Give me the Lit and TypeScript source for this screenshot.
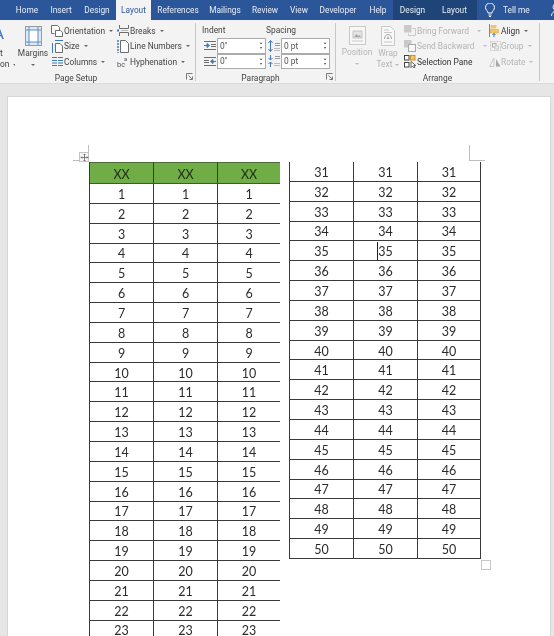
import { LitElement, html, css, svg } from "lit";
import { customElement } from "lit/decorators.js";

const TABS: [string, number, string][] = [
  ["Home", 34, ""], ["Insert", 34, ""], ["Design", 38, ""], ["Layout", 35, "active"],
  ["References", 54, ""], ["Mailings", 40, ""], ["Review", 40, ""], ["View", 28, ""],
  ["Developer", 50, ""], ["Help", 30, ""], ["Design", 39, "ctx"], ["Layout", 45, "ctx"],
];

const B = "#3f79bd", G = "#6d6d6d", L = "#c9c9c9", LD = "#a8a8a8";
const ic = (w: number, h: number, body: unknown) =>
  html`<svg class="ic" width=${w} height=${h} viewBox="0 0 ${w} ${h}">${body}</svg>`;

const icons = {
  margins: ic(17, 20, svg`<rect x=".5" y=".5" width="16" height="19" fill="#fff" stroke="#9a9a9a"/><rect x="1" y="1" width="15" height="18" fill="#dfe8f3"/><rect x="4" y="4" width="9" height="12" fill="#fff"/><path d="M4 1v18M13 1v18M1 4h15M1 16h15" stroke="#5b8fc9" fill="none"/>`),
  orientation: ic(12, 12, svg`<path d="M.5.5h6l2 2v4M.5.5v8h3" fill="#fff" stroke="${G}"/><path d="M4.5 5.5h5l2 2v4h-7z" fill="#fff" stroke="${G}"/>`),
  size: ic(11, 13, svg`<path d="M3 .5h8M.5 3v10" stroke="${B}" fill="none"/><path d="M3.500 3.500h4.500l2.500 2.500v6.500h-7z" fill="#fff" stroke="${G}"/>`),
  columns: ic(11, 9, svg`<path d="M0 .5h5M6 .5h5M0 3.500h5M6 3.500h5M0 6h5M6 6h5M0 8.500h5M6 8.500h5" stroke="${B}" fill="none"/>`),
  breaks: ic(12, 11, svg`<path d="M2.500 0v3.500h9V0M2.500 11V7.500h9V11" stroke="${G}" fill="none"/><path d="M0 5.500h2" stroke="${B}" stroke-width="2"/><path d="M4 5.500h7" stroke="#bbb"/>`),
  lines: ic(12, 13, svg`<path d="M1 0v13" stroke="${B}" stroke-width="1.500" stroke-dasharray="2 1"/><path d="M3.500.5h5l3 3v9h-8z" fill="#fff" stroke="${G}"/>`),
  hyph: ic(12, 11, svg`<text x="0" y="10.500" font-size="7.500" font-family="Roboto" fill="#555">bc</text><text x="7" y="5" font-size="6" font-family="Roboto" fill="#555">a</text>`),
  indL: ic(12, 9, svg`<path d="M0 .5h12M7 3.500h5M7 5.500h5M0 8.500h12" stroke="${G}" fill="none"/><path d="M0 4.500h4M3 2.500l2.500 2-2.500 2z" stroke="${B}" fill="${B}"/>`),
  indR: ic(12, 9, svg`<path d="M0 .5h12M0 3.500h5M0 5.500h5M0 8.500h12" stroke="${G}" fill="none"/><path d="M12 4.500H8M9 2.500l-2.500 2 2.500 2z" stroke="${B}" fill="${B}"/>`),
  spB: ic(12, 12, svg`<path d="M2.500 1v10M.5 3l2-2.500L4.500 3M.5 9l2 2.500L4.500 9" stroke="${B}" fill="none"/><path d="M7 3.500h5M7 5.500h5" stroke="#999" fill="none"/><path d="M6 8.500h6M6 10.500h6" stroke="#bbb" fill="none"/>`),
  spA: ic(12, 12, svg`<path d="M2.500 0v4.500M.5 3l2 2 2-2M2.500 12V7.500M.5 9l2-2 2 2" stroke="${B}" fill="none"/><path d="M7 1.500h5M7 3.500h5" stroke="#999" fill="none"/><path d="M6 8.500h6M6 10.500h6" stroke="#bbb" fill="none"/>`),
  position: ic(17, 19, svg`<rect x=".5" y=".5" width="16" height="18" fill="#f7f7f7" stroke="${L}"/><rect x="4" y="5" width="9" height="7" fill="#e4e4e4" stroke="${LD}" stroke-width=".6"/><path d="M5 11l2.500-3 2 2 1-1 1.500 2z" fill="${LD}"/><path d="M3 15h11" stroke="${L}"/>`),
  wrap: ic(14, 20, svg`<path d="M.5.5h9l4 4v15H.5z" fill="#f8f8f8" stroke="${L}"/><path d="M3 4h5M3 6.500h8M3 16h8" stroke="${L}"/><path d="M3.500 13c0-6 7-6 7 0" stroke="${LD}" fill="none"/><path d="M5.500 13l1.500-3 1.500 3z" fill="${LD}"/>`),
  fwd: ic(12, 11, svg`<rect x="0" y="0" width="7.500" height="7.500" fill="${L}"/><path d="M8.500 3.500h3v7h-7V8.500" fill="none" stroke="${L}"/>`),
  back: ic(12, 12, svg`<rect x="0" y="0" width="7.500" height="7.500" fill="${L}"/><rect x="4.500" y="4.500" width="7" height="7" fill="#f7f7f7" stroke="${LD}"/>`),
  pane: ic(13, 13, svg`<rect x=".5" y=".5" width="4.500" height="4.500" fill="#fff" stroke="#444"/><rect x=".5" y="7.500" width="4.500" height="4.500" fill="#fff" stroke="#444"/><rect x="6.500" y=".5" width="4.500" height="4.500" fill="#f2c46b" stroke="#c98f2a"/><path d="M7 6.500v6l1.500-1.500 1.500 2 1-.7-1.200-1.800h2z" fill="#fff" stroke="#444" stroke-width=".8"/>`),
  align: ic(10, 13, svg`<path d="M.5 0v13" stroke="#888"/><rect x="1.500" y="1" width="6" height="3.500" fill="#f2c46b"/><rect x="1.500" y="5.500" width="8" height="3.500" fill="#f2c46b" stroke="#d9a441" stroke-width=".5"/><path d="M5 13V9.500M3.500 11L5 9.500 6.500 11" stroke="${B}" fill="none"/>`),
  group: ic(13, 12, svg`<rect x="1.500" y="1.500" width="10" height="9" fill="none" stroke="${L}" stroke-dasharray="2 1"/><rect x="3.500" y="3.500" width="3.500" height="3.500" fill="none" stroke="${LD}"/><rect x="6" y="6" width="3.500" height="3" fill="#eee" stroke="${L}"/>`),
  rotate: ic(12, 10, svg`<path d="M.5 9.500L5 1v8.500z" fill="none" stroke="${L}"/><path d="M7 9.500V2l4.500 7.500z" fill="${LD}"/>`),
  launcher: ic(7, 7, svg`<path d="M.5 6.500v-6h6" fill="none" stroke="#777"/><path d="M2.500 2.500l3.500 3.500M6.500 3.500v3h-3" fill="none" stroke="#777"/>`),
  bulb: html`<svg class="ic" width="10" height="14" viewBox="0 0 10 14"><path d="M3 10c0-2-2.500-3-2.500-5.500a4.500 4.500 0 0 1 9 0C9.500 7 7 8 7 10zM3.500 12h3M4 13.500h2" fill="none" stroke="#fff"/></svg>`,
  person: html`<svg class="ic" width="6" height="14" viewBox="0 0 6 14"><circle cx="5" cy="4" r="3" fill="none" stroke="#dfe7f3"/><path d="M.5 13c0-3 2-5 4.500-5" fill="none" stroke="#dfe7f3"/></svg>`,
  move: html`<svg class="ic" width="9" height="9" viewBox="0 0 9 9"><path d="M4.500 1v7M1 4.500h7M3.500 2l1-1 1 1M3.500 7l1 1 1-1M2 3.500l-1 1 1 1M7 3.500l1 1-1 1" fill="none" stroke="#555" stroke-width=".7"/></svg>`,
};

@customElement("app-root")
export class AppRoot extends LitElement {
  static styles = css`
    :host { display: block; width: 554px; height: 636px; overflow: hidden; background: #e6e6e6; font-family: Roboto, sans-serif; filter: blur(0.3px); }
    .ic { display: block; flex: none; }
    .tabs { display: flex; height: 20px; background: #2b579a; padding-left: 10px; color: #e9eef6; font-size: 8.300px; }
    .tab { display: flex; align-items: center; justify-content: center; flex: none; height: 100%; }
    .tab.active { background: #f3f3f3; color: #2b579a; }
    .tab.ctx { background: #1f4478; }
    .tell { display: flex; align-items: center; margin-left: 8px; white-space: nowrap; }
    .tell span { margin-left: 8px; margin-right: 21px; }

    .ribbon { display: flex; height: 63px; background: #f3f3f3; border-bottom: 1px solid #dcdcdc; box-sizing: content-box; color: #444; font-size: 8.400px; }
    .group { position: relative; display: flex; flex-direction: column; flex: none; margin: 3px 0 2px; border-right: 1px solid #c8c8c8; }
    .g1 { width: 195px; } .g2 { width: 139px; } .g3 { width: 203px; }
    .body { display: flex; flex: 1; min-height: 0; }
    .glabel { height: 10px; line-height: 15px; text-align: center; color: #444; }
    .g1 .glabel { padding-right: 43px; }
    .g2 .glabel { padding-right: 10px; }
    .launch { position: absolute; right: 2px; bottom: 1px; }
    .caret { display: inline-block; flex: none; width: 0; height: 0; margin-left: 4px; vertical-align: middle; border: 2px solid transparent; border-top: 2.500px solid #666; border-bottom: 0; }
    .off .caret { border-top-color: #bbb; }

    .clip { width: 15px; flex: none; overflow: hidden; display: flex; flex-direction: column; align-items: flex-start; padding-top: 3px; line-height: 11px; box-sizing: border-box; }
    .clip .a { margin-left: -7px; height: 22px; color: #3f79bd; font-size: 17px; line-height: 14px; }
    .clip .t { white-space: nowrap; }
    .big { display: flex; flex-direction: column; align-items: center; flex: none; padding-top: 3px; line-height: 11px; }
    .big .ic { margin-bottom: 2px; }
    .big.off { color: #b4b4b4; }
    .marg { width: 32px; margin-left: 2px; }
    .big .cl { height: 11px; display: flex; align-items: center; justify-content: center; }
    .big .cl .caret { margin-left: 3px; }
    .big .cl.only .caret { margin-left: 0; }

    .col { display: flex; flex-direction: column; flex: none; }
    .cmd { display: flex; align-items: center; height: 15.500px; white-space: nowrap; }
    .iconbox { width: 14px; flex: none; display: flex; justify-content: center; }
    .c1 { width: 67px; margin-left: 1px; }
    .c2 { width: 73px; }
    .c2 .iconbox { width: 13px; justify-content: flex-start; }
    .off { color: #b4b4b4; }
    .dark { color: #333; }

    .g2 .body { padding-left: 6px; }
    .pcol { display: flex; flex-direction: column; width: 64px; flex: none; }
    .pcol.sp { width: 67px; }
    .plabel { height: 15px; line-height: 14px; }
    .prow { display: flex; align-items: center; height: 15.500px; }
    .pi { width: 15px; flex: none; display: flex; justify-content: center; }
    .input { display: flex; align-items: center; justify-content: space-between; box-sizing: border-box; width: 49px; height: 15.500px; flex: none; background: #fff; border: 1px solid #ababab; padding: 0 2px; color: #555; }
    .spin { display: flex; flex-direction: column; gap: 3px; padding-right: 1px; }
    .spin i { display: block; width: 0; height: 0; border: 1.500px solid transparent; }
    .spin i:first-child { border-bottom: 2px solid #444; border-top: 0; }
    .spin i:last-child { border-top: 2px solid #444; border-bottom: 0; }

    .pos { width: 30px; margin-left: 6px; }
    .wrap { width: 26px; margin-left: 3px; }
    .c3 { width: 85px; margin-left: 3px; }
    .c3 .iconbox { width: 13px; justify-content: flex-start; }
    .c4 { width: 45px; }
    .c4 .iconbox { width: 12px; justify-content: flex-start; }
    .c3 .caret.far { margin-left: 8px; }

    .shade { height: 13px; background: #e6e6e6; }
    .page { position: relative; box-sizing: border-box; margin-left: 8px; width: 542px; height: 539px; background: #fff; outline: 1px solid #d6d6d6; padding: 65px 0 0 81px; display: flex; align-items: flex-start; gap: 9px; }
    .table { display: grid; flex: none; font-family: Lato, sans-serif; font-size: 12.500px; color: #2b2b2b; border-left: 1px solid #3a3a3a; grid-auto-rows: 19.850px; }
    .table.left { grid-template-columns: 64px 64px 62px; grid-template-rows: 22px; }
    .table.right { grid-template-columns: 64px 64px 63px; }
    .cell { display: flex; align-items: center; justify-content: center; box-sizing: border-box; padding-top: 2px; border-bottom: 1px solid #3a3a3a; border-right: 1px solid #3a3a3a; }
    .left .cell:nth-child(3n) { border-right: 0; }
    .head { background: #70ad47; color: #1c2b14; }
    .left .head { border-top: 1px solid #4d6b3a; border-bottom: 1px solid #3f5a2e; }
    .cursor { position: relative; }
    .cursor::before { content: ""; position: absolute; left: -1px; top: -2px; bottom: -2px; width: 1px; background: #222; }
    .mark { position: absolute; border: 0 solid #bdbdbd; width: 16px; height: 16px; box-sizing: border-box; }
    .mark.tl { left: 65px; top: 48px; border-right-width: 1px; border-bottom-width: 1px; }
    .mark.tr { left: 461px; top: 48px; border-left-width: 1px; border-bottom-width: 1px; }
    .handle { position: absolute; left: 71px; top: 55px; width: 10px; height: 10px; box-sizing: border-box; border: 1px solid #c4c4c4; background: #f5f5f5; display: flex; align-items: center; justify-content: center; }
    .resize { position: absolute; left: 473px; top: 463px; width: 10px; height: 10px; box-sizing: border-box; border: 1px solid #c8c8c8; background: #fff; }
  `;

  private cmd(icon: unknown, text: string, cls = "", caret = true, far = false) {
    return html`<div class="cmd ${cls}"><span class="iconbox">${icon}</span><span class="txt">${text}</span>${caret ? html`<span class="caret ${far ? "far" : ""}"></span>` : ""}</div>`;
  }

  private spin(v: string) {
    return html`<div class="input"><span>${v}</span><span class="spin"><i></i><i></i></span></div>`;
  }

  private cells(from: number, to: number) {
    const out = [];
    for (let n = from; n <= to; n++) {
      for (let c = 0; c < 3; c++) {
        out.push(html`<div class="cell">${n === 35 && c === 1 ? html`<span class="cursor">${n}</span>` : n}</div>`);
      }
    }
    return out;
  }

  render() {
    return html`
      <div class="tabs">
        ${TABS.map(([t, w, c]) => html`<div class="tab ${c}" style="width:${w}px">${t}</div>`)}
        <div class="tell">${icons.bulb}<span>Tell me</span>${icons.person}</div>
      </div>
      <div class="ribbon">
        <div class="group g1">
          <div class="body">
            <div class="clip"><div class="a">A</div><div class="t">t</div><div class="t">on<span class="caret"></span></div></div>
            <div class="big marg">${icons.margins}<span>Margins</span><span class="cl only"><span class="caret"></span></span></div>
            <div class="col c1">
              ${this.cmd(icons.orientation, "Orientation")}
              ${this.cmd(icons.size, "Size")}
              ${this.cmd(icons.columns, "Columns")}
            </div>
            <div class="col c2">
              ${this.cmd(icons.breaks, "Breaks")}
              ${this.cmd(icons.lines, "Line Numbers")}
              ${this.cmd(icons.hyph, "Hyphenation")}
            </div>
          </div>
          <div class="glabel">Page Setup</div>
          <span class="launch">${icons.launcher}</span>
        </div>
        <div class="group g2">
          <div class="body">
            <div class="pcol">
              <div class="plabel">Indent</div>
              <div class="prow"><span class="pi">${icons.indL}</span>${this.spin("0\"")}</div>
              <div class="prow"><span class="pi">${icons.indR}</span>${this.spin("0\"")}</div>
            </div>
            <div class="pcol sp">
              <div class="plabel">Spacing</div>
              <div class="prow"><span class="pi">${icons.spB}</span>${this.spin("0 pt")}</div>
              <div class="prow"><span class="pi">${icons.spA}</span>${this.spin("0 pt")}</div>
            </div>
          </div>
          <div class="glabel">Paragraph</div>
          <span class="launch">${icons.launcher}</span>
        </div>
        <div class="group g3">
          <div class="body">
            <div class="big off pos">${icons.position}<span>Position</span><span class="cl only"><span class="caret"></span></span></div>
            <div class="big off wrap">${icons.wrap}<span>Wrap</span><span class="cl">Text<span class="caret"></span></span></div>
            <div class="col c3">
              ${this.cmd(icons.fwd, "Bring Forward", "off", true, true)}
              ${this.cmd(icons.back, "Send Backward", "off", true, true)}
              ${this.cmd(icons.pane, "Selection Pane", "dark", false)}
            </div>
            <div class="col c4">
              ${this.cmd(icons.align, "Align", "dark")}
              ${this.cmd(icons.group, "Group", "off")}
              ${this.cmd(icons.rotate, "Rotate", "off")}
            </div>
          </div>
          <div class="glabel">Arrange</div>
        </div>
      </div>
      <div class="shade"></div>
      <div class="page">
        <span class="mark tl"></span>
        <span class="mark tr"></span>
        <span class="handle">${icons.move}</span>
        <div class="table left">
          <div class="cell head">XX</div><div class="cell head">XX</div><div class="cell head">XX</div>
          ${this.cells(1, 23)}
        </div>
        <div class="table right">${this.cells(31, 50)}</div>
        <span class="resize"></span>
      </div>
    `;
  }
}
